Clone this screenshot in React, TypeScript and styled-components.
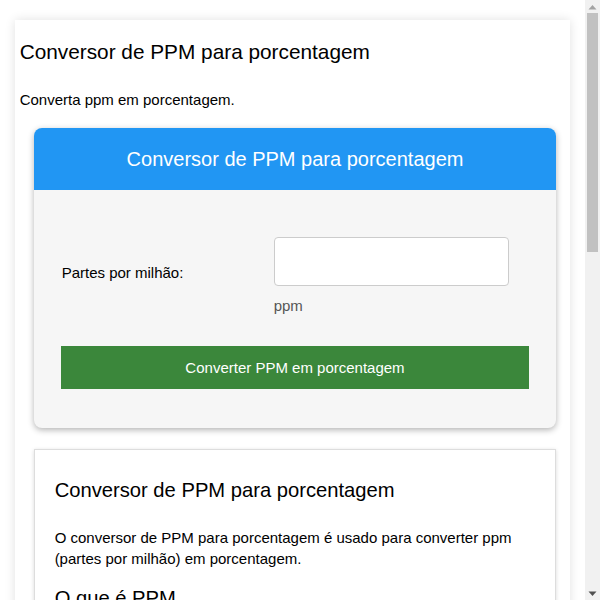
import React from "react";
import styled, { createGlobalStyle } from "styled-components";

const GlobalStyle = createGlobalStyle`
  html, body {
    margin: 0;
    padding: 0;
    height: 100%;
    overflow: hidden;
    background: #ffffff;
    font-family: "Liberation Sans", Arial, sans-serif;
    color: #000;
  }
`;

const Viewport = styled.div`
  display: flex;
  height: 100vh;
  overflow: hidden;
`;

const Content = styled.div`
  flex: 1;
  min-width: 0;
  overflow: hidden;
`;

const ScrollTrack = styled.div`
  width: 15px;
  flex-shrink: 0;
  background: #f1f1f1;
  display: flex;
  flex-direction: column;
  align-items: center;
`;

const ScrollArrow = styled.div`
  height: 13px;
  width: 15px;
  display: flex;
  align-items: center;
  justify-content: center;
`;

const ScrollThumb = styled.div`
  width: 11px;
  height: 239px;
  background: #c1c1c1;
`;

const ScrollRest = styled.div`
  flex: 1;
`;

const Page = styled.div`
  width: 95%;
  margin: 20px auto;
  padding: 18px 5px 30px 5px;
  box-sizing: border-box;
  background: #fff;
  box-shadow: 0 0 10px rgba(0, 0, 0, 0.12);
`;

const PageTitle = styled.h1`
  font-size: 20.8px;
  font-weight: 400;
  line-height: 23px;
  margin: 2px 0 28px 0;
`;

const Intro = styled.p`
  font-size: 15px;
  line-height: 17px;
  margin: 0 0 20px 0;
`;

const Widget = styled.div`
  margin: 0 9px 21px 14px;
  border-radius: 8px;
  overflow: hidden;
  background: #f6f6f6;
  box-shadow: 0 2px 6px rgba(0, 0, 0, 0.3);
`;

const WidgetHeader = styled.div`
  height: 62px;
  background: #2196f3;
  color: #fff;
  display: flex;
  align-items: center;
  justify-content: center;
  font-size: 20px;
`;

const WidgetBody = styled.div`
  padding: 47px 27px 39px 27px;
`;

const FieldRow = styled.div`
  display: grid;
  grid-template-columns: 213px 235px;
  align-items: center;
`;

const Label = styled.label`
  font-size: 15px;
  padding: 0 0 6px 1px;
`;

const FieldCell = styled.div`
  display: flex;
  flex-direction: column;
`;

const Input = styled.input`
  width: 235px;
  height: 49px;
  box-sizing: border-box;
  border: 1px solid #cccccc;
  border-radius: 4px;
  background: #fff;
  font-size: 15px;
  padding: 0 10px;
  outline: none;
`;

const Unit = styled.span`
  font-size: 15px;
  color: #555;
  margin-top: 11px;
  line-height: 17px;
`;

const ConvertButton = styled.button`
  display: block;
  width: 100%;
  height: 43px;
  margin-top: 32px;
  border: none;
  background: #3b873b;
  color: #fff;
  font-family: "Liberation Sans", Arial, sans-serif;
  font-size: 15px;
  cursor: pointer;
`;

const Article = styled.div`
  margin: 0 9px 0 14px;
  padding: 29px 20px 24px 20px;
  border: 1px solid #dddddd;
  background: #fff;
  box-shadow: 0 1px 4px rgba(0, 0, 0, 0.15);
`;

const ArticleTitle = styled.h2`
  font-size: 20.2px;
  font-weight: 400;
  line-height: 23px;
  margin: 0 0 25px 0;
`;

const SubTitle = styled.h3`
  font-size: 20.2px;
  font-weight: 400;
  line-height: 23px;
  margin: 18px 0 20px 0;
`;

const Text = styled.p`
  font-size: 15px;
  line-height: 21px;
  margin: 0 0 16px 0;
`;

const rows = [
  ["1 ppm", "0,0001 %"],
  ["10 ppm", "0,001 %"],
  ["100 ppm", "0,01 %"],
];

export default function App() {
  return (
    <>
      <GlobalStyle />
      <Viewport>
        <Content>
          <Page>
            <PageTitle>Conversor de PPM para porcentagem</PageTitle>
            <Intro>Converta ppm em porcentagem.</Intro>

            <Widget>
              <WidgetHeader>Conversor de PPM para porcentagem</WidgetHeader>
              <WidgetBody>
                <FieldRow>
                  <Label htmlFor="ppm">Partes por milhão:</Label>
                  <FieldCell>
                    <Input id="ppm" type="text" />
                    <Unit>ppm</Unit>
                  </FieldCell>
                </FieldRow>
                <ConvertButton>Converter PPM em porcentagem</ConvertButton>
              </WidgetBody>
            </Widget>

            <Article>
              <ArticleTitle>Conversor de PPM para porcentagem</ArticleTitle>
              <Text>
                O conversor de PPM para porcentagem é usado para converter ppm
                (partes por milhão) em porcentagem.
              </Text>
              <SubTitle>O que é PPM</SubTitle>
              <Text>
                PPM significa partes por milhão. É uma unidade usada para
                expressar concentrações muito pequenas.
              </Text>
              {rows.map(([a, b]) => (
                <Text key={a}>
                  {a} = {b}
                </Text>
              ))}
            </Article>
          </Page>
        </Content>
        <ScrollTrack>
          <ScrollArrow>
            <svg width="9" height="6" viewBox="0 0 9 6">
              <polygon points="0.5,5.5 8.5,5.5 4.5,1" fill="#a3a3a3" />
            </svg>
          </ScrollArrow>
          <ScrollThumb />
          <ScrollRest />
          <ScrollArrow>
            <svg width="9" height="6" viewBox="0 0 9 6">
              <polygon points="0.5,0.5 8.5,0.5 4.5,5" fill="#505050" />
            </svg>
          </ScrollArrow>
        </ScrollTrack>
      </Viewport>
    </>
  );
}
